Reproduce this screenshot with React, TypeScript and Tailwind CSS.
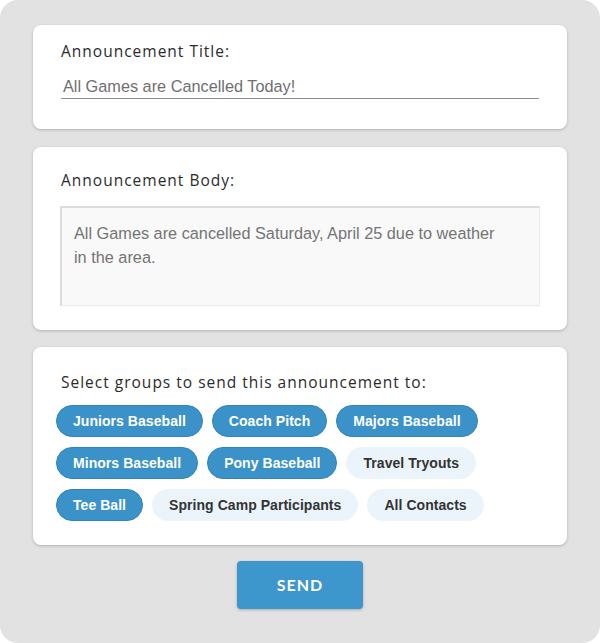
import React from "react";

const groups: { name: string; on: boolean }[][] = [
  [
    { name: "Juniors Baseball", on: true },
    { name: "Coach Pitch", on: true },
    { name: "Majors Baseball", on: true },
  ],
  [
    { name: "Minors Baseball", on: true },
    { name: "Pony Baseball", on: true },
    { name: "Travel Tryouts", on: false },
  ],
  [
    { name: "Tee Ball", on: true },
    { name: "Spring Camp Participants", on: false },
    { name: "All Contacts", on: false },
  ],
];

const labelCls =
  "font-['Open_Sans',sans-serif] text-[15.5px] leading-[20px] tracking-[1px] text-[#2b2b2b]";

export default function App() {
  return (
    <div className="w-[600px] h-[643px] bg-white">
      <div className="w-[600px] h-[643px] bg-[#e2e2e2] rounded-[18px] px-[33px] pt-[25px] flex flex-col">
        {/* Title card */}
        <div className="bg-white rounded-[8px] shadow-[0_1px_3px_rgba(0,0,0,0.22)] px-[28px] pt-[16px] pb-[30px]">
          <div className={labelCls}>Announcement Title:</div>
          <div className="mt-[15px] border-b-[1.5px] border-[#8a8a8a] pb-[2px] pl-[2px] font-['Liberation_Sans',Arial,sans-serif] text-[16.3px] leading-[20px] text-[#6f6f6f]">
            All Games are Cancelled Today!
          </div>
        </div>

        {/* Body card */}
        <div className="mt-[18px] bg-white rounded-[8px] shadow-[0_1px_3px_rgba(0,0,0,0.22)] px-[27px] pt-[23px] pb-[24px]">
          <div className={labelCls + " ml-[1px]"}>Announcement Body:</div>
          <div className="mt-[16px] h-[100px] bg-[#f9f9f9] border-t-2 border-l-2 border-r border-b border-t-[#dcdcdc] border-l-[#dcdcdc] border-r-[#eaeaea] border-b-[#eaeaea] pl-[12px] pt-[13px] pr-[40px] font-['Liberation_Sans',Arial,sans-serif] text-[16.3px] leading-[24px] text-[#747474]">
            All Games are cancelled Saturday, April 25 due to weather in the area.
          </div>
        </div>

        {/* Groups card */}
        <div className="mt-[17px] bg-white rounded-[8px] shadow-[0_1px_3px_rgba(0,0,0,0.22)] pl-[23px] pr-[20px] pt-[25px] pb-[24px]">
          <div className={labelCls + " ml-[5px]"}>
            Select groups to send this announcement to:
          </div>
          <div className="mt-[13px] flex flex-col gap-[10px]">
            {groups.map((row, i) => (
              <div key={i} className="flex gap-[9px]">
                {row.map((g) => (
                  <div
                    key={g.name}
                    className={
                      "h-[32px] rounded-full px-[16px] flex items-center font-['Liberation_Sans',Arial,sans-serif] font-bold text-[14px] tracking-[0.05px] " +
                      (g.on
                        ? "bg-[#3a92c9] border border-[#2f86bd] text-white"
                        : "bg-[#ebf4fb] border border-[#ebf4fb] text-[#333333]")
                    }
                  >
                    {g.name}
                  </div>
                ))}
              </div>
            ))}
          </div>
        </div>

        {/* Send button */}
        <div className="mt-[16px] flex justify-center">
          <button className="w-[126px] h-[48px] rounded-[4px] bg-[#3d96cc] shadow-[0_1px_3px_rgba(0,0,0,0.25)] text-white font-['Lato',sans-serif] font-bold text-[16px] tracking-[1px]">
            SEND
          </button>
        </div>
      </div>
    </div>
  );
}
